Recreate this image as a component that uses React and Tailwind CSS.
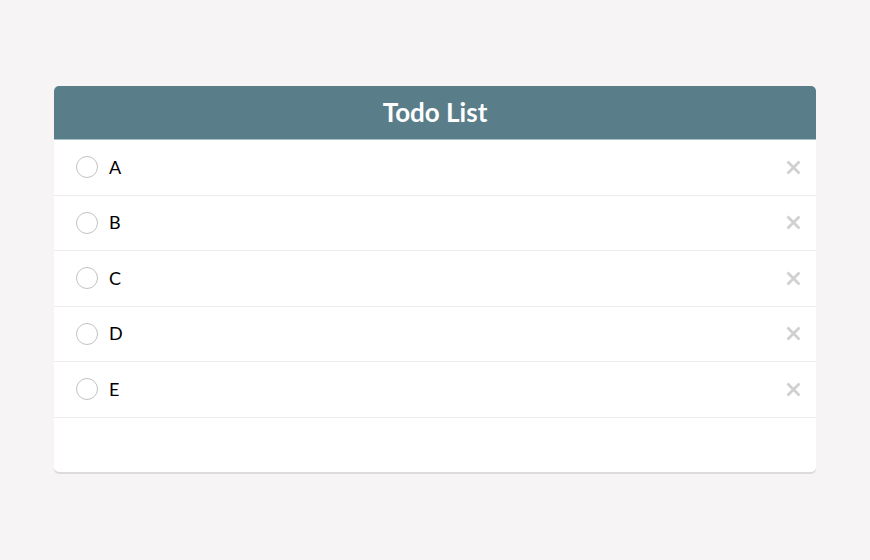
const items = ["A", "B", "C", "D", "E"];

function TodoRow({ label }) {
  return (
    <li className="flex h-[55.5px] items-center border-b border-[#ececec] pl-[22px] pr-[11px]">
      <span className="h-[22px] w-[22px] rounded-full border border-[#c2c2c2]" />
      <span className="ml-[11px] flex-1 text-[18px] text-black">{label}</span>
      <button type="button" className="flex h-6 w-6 items-center justify-center text-[#d0d0d0]">
        <svg width="15" height="15" viewBox="0 0 15 15" fill="none">
          <path d="M1.5 1.5 L13.5 13.5 M13.5 1.5 L1.5 13.5" stroke="currentColor" strokeWidth="2.8" strokeLinecap="butt" />
        </svg>
      </button>
    </li>
  );
}

export default function App() {
  return (
    <div className="min-h-[560px] bg-[#f6f4f5] px-[54px] pt-[86px]" style={{ fontFamily: "Lato, 'Open Sans', sans-serif" }}>
      <div className="overflow-hidden rounded-[5px] bg-white shadow-[0_2px_0_#dcdcdc]">
        <header className="flex h-[54px] items-center justify-center border-b border-[#a9c0c8] bg-[#5a7d8a]">
          <h1 className="text-[26px] font-bold text-white">Todo List</h1>
        </header>
        <ul>
          {items.map((item) => (
            <TodoRow key={item} label={item} />
          ))}
        </ul>
        <div className="h-[54px]" />
      </div>
    </div>
  );
}
